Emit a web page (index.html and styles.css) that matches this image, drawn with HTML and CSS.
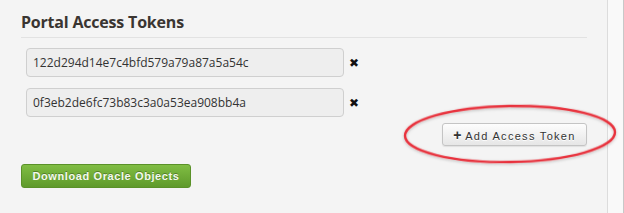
FILE: index.html
```html
<!DOCTYPE html>
<html lang="en">
<head>
    <meta charset="UTF-8">
    <title>Portal Access Tokens</title>
    <link rel="stylesheet" href="styles.css">
</head>
<body>
    <div class="page">
        <div class="panel">
            <h2 class="panel-title">Portal Access Tokens</h2>
            <div class="token-list">
                <div class="token-row">
                    <input class="token-input" type="text" value="122d294d14e7c4bfd579a79a87a5a54c" readonly>
                    <span class="token-remove">&#10006;</span>
                </div>
                <div class="token-row">
                    <input class="token-input" type="text" value="0f3eb2de6fc73b83c3a0a53ea908bb4a" readonly>
                    <span class="token-remove">&#10006;</span>
                </div>
            </div>
            <div class="add-row">
                <button class="btn btn-add"><span class="plus">+</span> Add Access Token</button>
            </div>
            <button class="btn btn-download">Download Oracle Objects</button>
        </div>
        <div class="sidebar"></div>

        <!-- annotation circle drawn over the screenshot -->
        <svg class="highlight" width="230" height="76" viewBox="0 0 230 76">
            <defs>
                <filter id="soft" x="-10%" y="-20%" width="120%" height="140%">
                    <feDropShadow dx="0" dy="1" stdDeviation="1.5" flood-color="#000" flood-opacity="0.25"/>
                </filter>
            </defs>
            <ellipse cx="115" cy="38" rx="105" ry="28" fill="none" stroke="#e8323c" stroke-width="2.4" filter="url(#soft)" transform="rotate(-1 115 38)"/>
        </svg>
    </div>
</body>
</html>
```

FILE: styles.css
```css
/* Page */
body {
    margin: 0;
    background: #f4f4f4;
    font-family: "Open Sans", "Liberation Sans", sans-serif;
    color: #333;
}

.page {
    position: relative;
    display: flex;
    height: 213px;
    overflow: hidden;
}

/* Main panel */
.panel {
    width: 566px;
    padding: 10px 20px 0 21px;
    border-right: 1px solid #dcdcdc;
    background: #f4f4f4;
}

.sidebar {
    flex: 1;
    background: #f9f9f9;
    border-right: 1px solid #c8c8c8;
}

.panel-title {
    margin: 0;
    padding-bottom: 3px;
    font-size: 16px;
    line-height: 24px;
    font-weight: 700;
    letter-spacing: -0.2px;
    color: #3a3531;
    border-bottom: 1px solid #e2e2e2;
}

/* Token rows */
.token-list {
    display: flex;
    flex-direction: column;
    gap: 11px;
    margin: 10px 0 0 5px;
}

.token-row {
    display: flex;
    align-items: center;
    gap: 5px;
}

.token-input {
    box-sizing: border-box;
    width: 318px;
    height: 29px;
    padding: 0 6px;
    border: 1px solid #cfcfcf;
    border-radius: 4px;
    background: #eeeeee;
    font-family: "Open Sans", sans-serif;
    font-size: 12px;
    color: #333;
    outline: none;
}

.token-remove {
    font-size: 12px;
    line-height: 12px;
    font-weight: 700;
    color: #111;
    font-family: "DejaVu Sans", sans-serif;
}

/* Buttons */
.btn {
    display: inline-block;
    box-sizing: border-box;
    font-family: "Liberation Sans", Arial, sans-serif;
    font-size: 11px;
    border-radius: 3px;
    cursor: pointer;
}

.add-row {
    display: flex;
    justify-content: flex-end;
    margin-top: 6px;
}

.btn-add {
    width: 145px;
    height: 23px;
    padding: 0;
    letter-spacing: 1.3px;
    color: #333;
    background: linear-gradient(#fdfdfd, #e6e6e6);
    border: 1px solid #c4c4c4;
    box-shadow: 0 1px 1px rgba(0, 0, 0, 0.08);
    text-shadow: 0 1px 0 #fff;
}

.btn-add .plus {
    font-weight: 700;
    font-size: 14px;
    letter-spacing: 0;
}

.btn-download {
    margin-top: 18px;
    width: 170px;
    height: 24px;
    padding: 0;
    letter-spacing: 0.6px;
    font-weight: 700;
    color: #f4f9ee;
    background: linear-gradient(#80bd43, #5f9a2b);
    border: 1px solid #5a9128;
    text-shadow: 0 -1px 0 rgba(0, 0, 0, 0.3);
}

/* Annotation */
.highlight {
    position: absolute;
    left: 395px;
    top: 96px;
}
```
